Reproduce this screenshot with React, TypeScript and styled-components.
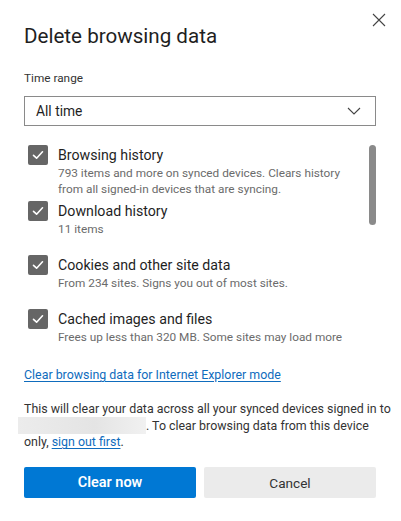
import React from 'react';
import styled, { createGlobalStyle } from 'styled-components';

const GlobalStyle = createGlobalStyle`
    html, body {
        margin: 0;
        padding: 0;
        background: #ffffff;
    }
    body {
        font-family: Roboto, "Noto Sans", sans-serif;
        color: #1f1f1f;
    }
`;

const Dialog = styled.div`
    position: relative;
    width: 401px;
    height: 521px;
    box-sizing: border-box;
    padding: 20px 25px 0 24px;
    background: #ffffff;
`;

const CloseButton = styled.button`
    position: absolute;
    top: 10px;
    right: 12px;
    width: 20px;
    height: 20px;
    padding: 0;
    border: none;
    background: transparent;
    display: flex;
    align-items: center;
    justify-content: center;
    color: #444;
`;

const Title = styled.h1`
    margin: 0;
    font-size: 20.6px;
    line-height: 32px;
    font-weight: 400;
    color: #1f1f1f;
`;

const FieldLabel = styled.div`
    margin-top: 18px;
    font-size: 11.8px;
    line-height: 16px;
    color: #333;
`;

const Select = styled.div`
    margin-top: 10px;
    height: 30px;
    box-sizing: border-box;
    border: 1px solid #8a8a8a;
    display: flex;
    align-items: center;
    justify-content: space-between;
    padding: 0 14px 0 11px;
    font-size: 13.8px;
    color: #1f1f1f;
`;

const ListArea = styled.div`
    margin-top: 14px;
    height: 210px;
    display: flex;
`;

const List = styled.div`
    flex: 1;
    display: flex;
    flex-direction: column;
`;

const ScrollTrack = styled.div`
    width: 7px;
    padding-top: 5px;
`;

const ScrollThumb = styled.div`
    width: 7px;
    height: 80px;
    border-radius: 4px;
    background: #8a8a8a;
`;

const Item = styled.div<{ $minHeight: number }>`
    display: flex;
    gap: 10px;
    min-height: ${p => p.$minHeight}px;
    padding-left: 4px;
`;

const Box = styled.div`
    flex: none;
    width: 20px;
    height: 20px;
    margin-top: 5px;
    border-radius: 2px;
    background: #666666;
    display: flex;
    align-items: center;
    justify-content: center;
`;

const ItemText = styled.div`
    display: flex;
    flex-direction: column;
    white-space: nowrap;
`;

const ItemTitle = styled.div`
    font-size: 14.2px;
    line-height: 20px;
    margin-top: 5px;
    color: #1f1f1f;
`;

const ItemDesc = styled.div`
    font-size: 11.8px;
    line-height: 16px;
    color: #6b6b6b;
`;

const Link = styled.a`
    color: #0f6cbd;
    text-decoration: underline;
    text-underline-offset: 2px;
    cursor: pointer;
`;

const IELink = styled(Link)`
    display: inline-block;
    margin-top: 16px;
    font-size: 12.4px;
    line-height: 18px;
`;

const Notice = styled.p`
    margin: 17px 0 0 0;
    font-size: 12.4px;
    line-height: 16px;
    color: #333;
    white-space: nowrap;
`;

const Redacted = styled.span`
    display: inline-block;
    width: 128px;
    height: 17px;
    margin-left: -6px;
    vertical-align: -4px;
    background: linear-gradient(90deg, #ececec, #e4e4e4 60%, #f1f1f1);
`;

const Buttons = styled.div`
    margin-top: 17px;
    display: grid;
    grid-template-columns: 1fr 1fr;
    gap: 8px;
`;

const Button = styled.button<{ $primary?: boolean }>`
    height: 31px;
    border: none;
    border-radius: 2px;
    font-family: inherit;
    font-size: ${p => (p.$primary ? 14.5 : 13.6)}px;
    font-weight: ${p => (p.$primary ? 600 : 400)};
    color: ${p => (p.$primary ? '#ffffff' : '#333333')};
    background: ${p => (p.$primary ? '#0078d4' : '#ebebeb')};
`;

const Check = () => (
    <svg width="14" height="14" viewBox="0 0 14 14" fill="none">
        <path d="M2.5 7.3 L5.6 10.2 L11.5 3.8" stroke="#fff" strokeWidth="1.6" strokeLinecap="round" strokeLinejoin="round" />
    </svg>
);

type Entry = { title: string; desc: string[]; height: number };

const entries: Entry[] = [
    { title: 'Browsing history', desc: ['793 items and more on synced devices. Clears history', 'from all signed-in devices that are syncing.'], height: 56 },
    { title: 'Download history', desc: ['11 items'], height: 54 },
    { title: 'Cookies and other site data', desc: ['From 234 sites. Signs you out of most sites.'], height: 54 },
    { title: 'Cached images and files', desc: ['Frees up less than 320 MB. Some sites may load more'], height: 54 },
];

export default function App() {
    return (
        <>
            <GlobalStyle />
            <Dialog>
                <CloseButton aria-label="Close">
                    <svg width="14" height="14" viewBox="0 0 14 14">
                        <path d="M1 1 L13 13 M13 1 L1 13" stroke="#444" strokeWidth="1.1" />
                    </svg>
                </CloseButton>
                <Title>Delete browsing data</Title>
                <FieldLabel>Time range</FieldLabel>
                <Select>
                    <span>All time</span>
                    <svg width="14" height="8" viewBox="0 0 14 8">
                        <path d="M1 1 L7 7 L13 1" stroke="#444" strokeWidth="1.1" fill="none" />
                    </svg>
                </Select>
                <ListArea>
                    <List>
                        {entries.map(e => (
                            <Item key={e.title} $minHeight={e.height}>
                                <Box><Check /></Box>
                                <ItemText>
                                    <ItemTitle>{e.title}</ItemTitle>
                                    {e.desc.map(d => <ItemDesc key={d}>{d}</ItemDesc>)}
                                </ItemText>
                            </Item>
                        ))}
                    </List>
                    <ScrollTrack><ScrollThumb /></ScrollTrack>
                </ListArea>
                <IELink>Clear browsing data for Internet Explorer mode</IELink>
                <Notice>
                    This will clear your data across all your synced devices signed in to<br />
                    <Redacted />. To clear browsing data from this device<br />
                    only, <Link>sign out first</Link>.
                </Notice>
                <Buttons>
                    <Button $primary>Clear now</Button>
                    <Button>Cancel</Button>
                </Buttons>
            </Dialog>
        </>
    );
}
